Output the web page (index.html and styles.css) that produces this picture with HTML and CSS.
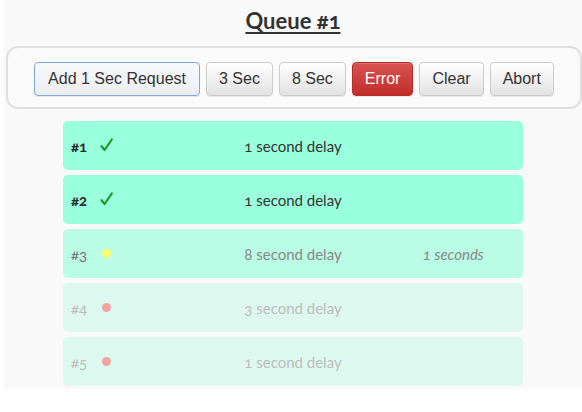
FILE: index.html
```html
<!DOCTYPE html>
<html>
<head>
	<meta charset="utf-8">
	<title>Queue #1</title>
	<link rel="stylesheet" href="styles.css">
</head>
<body>
	<div class="page">
		<h1 class="title">Queue #1</h1>
		<div class="toolbar">
			<button type="button" class="btn focus">Add 1 Sec Request</button>
			<button type="button" class="btn">3 Sec</button>
			<button type="button" class="btn">8 Sec</button>
			<button type="button" class="btn danger">Error</button>
			<button type="button" class="btn">Clear</button>
			<button type="button" class="btn">Abort</button>
		</div>
		<div class="queue">
			<div class="item done">
				<div class="label"><b>#1</b>
					<svg class="check" width="13" height="14" viewBox="0 0 13 14"><path d="M1.5 8.2 L4.6 12 L11.8 1.5" fill="none" stroke="#189a2c" stroke-width="2.2" stroke-linecap="round" stroke-linejoin="round"/></svg>
				</div>
				<div class="desc">1 second delay</div>
				<div class="timer"></div>
			</div>
			<div class="item done">
				<div class="label"><b>#2</b>
					<svg class="check" width="13" height="14" viewBox="0 0 13 14"><path d="M1.5 8.2 L4.6 12 L11.8 1.5" fill="none" stroke="#189a2c" stroke-width="2.2" stroke-linecap="round" stroke-linejoin="round"/></svg>
				</div>
				<div class="desc">1 second delay</div>
				<div class="timer"></div>
			</div>
			<div class="item running">
				<div class="label"><span>#3</span><i class="dot yellow"></i></div>
				<div class="desc">8 second delay</div>
				<div class="timer">1 seconds</div>
			</div>
			<div class="item waiting">
				<div class="label"><span>#4</span><i class="dot red"></i></div>
				<div class="desc">3 second delay</div>
				<div class="timer"></div>
			</div>
			<div class="item waiting">
				<div class="label"><span>#5</span><i class="dot red"></i></div>
				<div class="desc">1 second delay</div>
				<div class="timer"></div>
			</div>
		</div>
	</div>
</body>
</html>
```

FILE: styles.css
```css
body {
	margin: 0;
	background: #fff;
	font-family: Lato, "Open Sans", sans-serif;
	color: #333;
}

.page {
	margin-left: 4px;
	background-color: #f9f9f9;
	padding: 8px 0 3px 0;
}

.title {
	margin: 0;
	text-align: center;
	font-size: 22px;
	line-height: 26px;
	font-weight: bold;
	text-decoration: underline;
	text-underline-offset: 3px;
	text-decoration-thickness: 2px;
	color: #333;
	font-variant-numeric: oldstyle-nums;
}

.toolbar {
	margin: 12px 0 12px 2px;
	border: 2px solid #dfdfdf;
	border-radius: 12px;
	padding: 14px 0 11px 0;
	display: flex;
	justify-content: center;
	gap: 6px;
	background-color: #fafafa;
}

.btn {
	font-family: "Liberation Sans", Arial, sans-serif;
	font-size: 16px;
	line-height: 20px;
	color: #333;
	padding: 6px 12px;
	border: 1px solid #ccc;
	border-radius: 4px;
	background: linear-gradient(#fff, #e2e2e2);
	box-shadow: inset 0 1px 0 rgba(255,255,255,0.15), 0 1px 1px rgba(0,0,0,0.075);
	outline: none;
}

.btn.focus {
	border-color: #7ea9dd;
	background: linear-gradient(#f8f9fb, #eceef1);
	padding: 6px 13px;
}

.btn.danger {
	color: #fff;
	border-color: #b92c28;
	background: linear-gradient(#d9534f, #c12e2a);
}

.queue {
	width: 460px;
	margin: 0 auto;
	display: flex;
	flex-direction: column;
	gap: 5px;
}

.item {
	height: 49px;
	border-radius: 5px;
	display: grid;
	grid-template-columns: 1fr 1fr 1fr;
	align-items: center;
	font-size: 15px;
	font-variant-numeric: oldstyle-nums;
}

.item.done { background-color: #9affdc; color: #333; }
.item.running { background-color: #bafce5; color: #888; }
.item.waiting { background-color: #ddf9ef; color: #bcbcbc; }

.label {
	padding-left: 8px;
	display: flex;
	align-items: center;
}

.label b, .label span {
	width: 29px;
}

.item.done .label b { color: #2a2a2a; }
.item.running .label span { color: #777; }

.check {
	margin-top: -2px;
}

.dot {
	width: 9px;
	height: 9px;
	border-radius: 50%;
	display: inline-block;
	margin-left: 2px;
}

.dot.yellow { background-color: #fbfd6a; }
.dot.red { background-color: #f3a3a3; }

.desc {
	text-align: center;
	white-space: nowrap;
}

.timer {
	text-align: center;
	font-style: italic;
	padding-left: 14px;
}
```
